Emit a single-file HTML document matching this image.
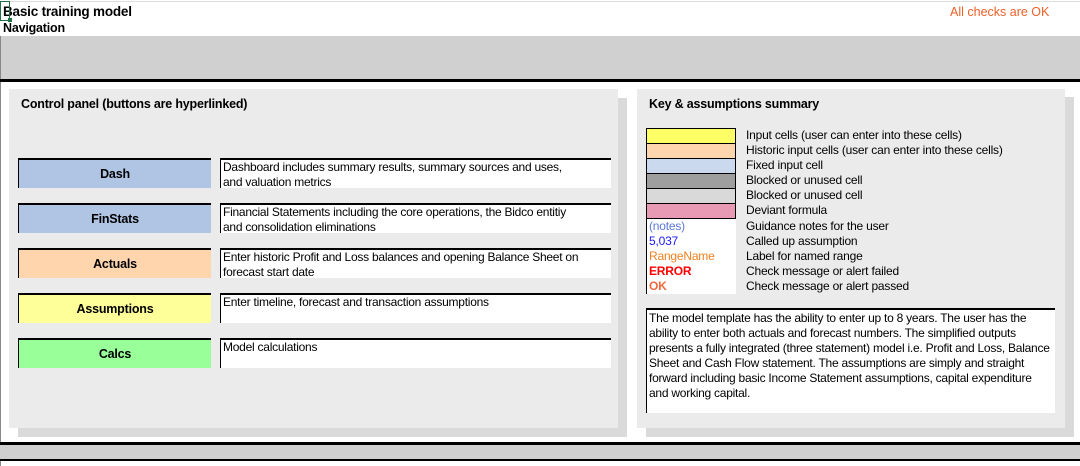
<!DOCTYPE html>
<html><head><meta charset="utf-8"><style>
*{margin:0;padding:0;box-sizing:border-box}
body{width:1080px;height:466px;background:#fff;position:relative;overflow:hidden;font-family:"Liberation Sans",sans-serif;font-size:12px;color:#000;letter-spacing:-0.2px}
.a{position:absolute}
.b{font-family:"Liberation Sans",sans-serif;font-weight:bold;font-size:12.5px;letter-spacing:-0.2px}
.btn{position:absolute;left:18px;width:193px;height:30px;border-top:2px solid #000;border-left:1px solid #000;text-align:center;line-height:28px}
.desc{position:absolute;left:220px;width:391px;height:30px;background:#fff;border-top:2px solid #000;border-left:1px solid #000;padding:0 2px;line-height:15px;font-size:12px;white-space:nowrap;letter-spacing:-0.25px}
.sw{position:absolute;left:646px;width:90px;height:15px;border:1px solid #000;border-bottom:none}
.kt{position:absolute;left:746px;font-size:12px;line-height:15px}
.kl{position:absolute;left:649px;font-size:12px;line-height:15px}
</style></head><body>
<div class="a" style="left:0;top:0;width:1080px;height:2px;border-bottom:1px solid #ddd"></div>
<div class="a b" style="left:3px;top:4px;font-size:13.5px">Basic training model</div>
<div class="a" style="left:0;top:1px;width:10px;height:20px;border:1px solid #217346"></div>
<div class="a" style="left:8px;top:18px;width:4px;height:4px;background:#217346"></div>
<div class="a b" style="left:3px;top:21px;font-size:12.5px">Navigation</div>
<div class="a" style="left:950px;top:5px;color:#f0602a;font-size:12.5px;letter-spacing:0">All checks are OK</div>
<div class="a" style="left:0;top:36px;width:1080px;height:43px;background:#d0d0d0;border-left:1px solid #888"></div>
<div class="a" style="left:0;top:79px;width:1080px;height:3px;background:#000"></div>
<div class="a" style="left:0;top:82px;width:1px;height:384px;background:#888"></div>
<div class="a" style="left:18px;top:98px;width:609px;height:339px;background:#dadada"></div>
<div class="a" style="left:9px;top:89px;width:609px;height:339px;background:#ebebeb"></div>
<div class="a b" style="left:21px;top:97px">Control panel (buttons are hyperlinked)</div>
<div class="btn b" style="top:158px;background:#b0c4e4">Dash</div>
<div class="desc" style="top:158px">Dashboard includes summary results, summary sources and uses,<br>and valuation metrics</div>
<div class="btn b" style="top:203px;background:#b0c4e4">FinStats</div>
<div class="desc" style="top:203px">Financial Statements including the core operations, the Bidco entitiy<br>and consolidation eliminations</div>
<div class="btn b" style="top:248px;background:#ffd5ae">Actuals</div>
<div class="desc" style="top:248px">Enter historic Profit and Loss balances and opening Balance Sheet on<br>forecast start date</div>
<div class="btn b" style="top:293px;background:#ffff99">Assumptions</div>
<div class="desc" style="top:293px">Enter timeline, forecast and transaction assumptions</div>
<div class="btn b" style="top:338px;background:#99ff99">Calcs</div>
<div class="desc" style="top:338px">Model calculations</div>
<div class="a" style="left:646px;top:97px;width:428px;height:340px;background:#dadada"></div>
<div class="a" style="left:637px;top:89px;width:428px;height:339px;background:#ebebeb"></div>
<div class="a b" style="left:649px;top:97px">Key &amp; assumptions summary</div>
<div class="sw" style="top:128px;background:#ffff66"></div>
<div class="sw" style="top:143px;background:#ffd5ae"></div>
<div class="sw" style="top:158px;background:#cbd9ee"></div>
<div class="sw" style="top:173px;background:#9e9e9e"></div>
<div class="sw" style="top:188px;background:#d9d9d9"></div>
<div class="sw" style="top:203px;background:#e89ab5;border-bottom:1px solid #000;height:16px"></div>
<div class="a" style="left:646px;top:219px;width:90px;height:75px;background:#fff;border-left:1px solid #000"></div>
<div class="kl" style="top:219px;color:#5b78d6">(notes)</div>
<div class="kl" style="top:234px;color:#1a1aff">5,037</div>
<div class="kl" style="top:249px;color:#f08020">RangeName</div>
<div class="kl b" style="top:264px;color:#ff0000;font-size:12px">ERROR</div>
<div class="kl b" style="top:279px;color:#f06a40;font-size:12px">OK</div>
<div class="kt" style="top:128px">Input cells (user can enter into these cells)</div>
<div class="kt" style="top:143px">Historic input cells (user can enter into these cells)</div>
<div class="kt" style="top:158px">Fixed input cell</div>
<div class="kt" style="top:173px">Blocked or unused cell</div>
<div class="kt" style="top:188px">Blocked or unused cell</div>
<div class="kt" style="top:203px">Deviant formula</div>
<div class="kt" style="top:219px">Guidance notes for the user</div>
<div class="kt" style="top:234px">Called up assumption</div>
<div class="kt" style="top:249px">Label for named range</div>
<div class="kt" style="top:264px">Check message or alert failed</div>
<div class="kt" style="top:279px">Check message or alert passed</div>
<div class="a" style="left:646px;top:308px;width:409px;height:105px;background:#fff;border-top:2px solid #000;border-left:1px solid #000;padding:1px 2px;font-size:12px;line-height:15px;letter-spacing:-0.25px">The model template has the ability to enter up to 8 years. The user has the ability to enter both actuals and forecast numbers. The simplified outputs presents a fully integrated (three statement) model i.e. Profit and Loss, Balance Sheet and Cash Flow statement. The assumptions are simply and straight forward including basic Income Statement assumptions, capital expenditure and working capital.</div>
<div class="a" style="left:0;top:442px;width:1080px;height:3px;background:#000"></div>
<div class="a" style="left:0;top:445px;width:1080px;height:14px;background:#d0d0d0"></div>
<div class="a" style="left:0;top:459px;width:1080px;height:2px;background:#000"></div>
</body></html>
